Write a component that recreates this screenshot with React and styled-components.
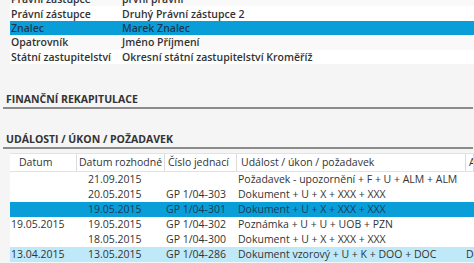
import React from 'react';
import styled, { createGlobalStyle } from 'styled-components';

const GlobalStyle = createGlobalStyle`
  html, body {
    margin: 0;
    padding: 0;
    background: #f5f5f5;
    font-family: "Open Sans", "DejaVu Sans", sans-serif;
    color: #333;
    overflow: hidden;
  }
`;

const Page = styled.div`
  width: 474px;
  height: 263px;
  overflow: hidden;
`;

const InfoTable = styled.div`
  margin-top: -8px;
  margin-left: 10px;
  display: flex;
  flex-direction: column;
`;

const InfoRow = styled.div`
  display: grid;
  grid-template-columns: 111px 1fr;
  height: 14.4px;
  align-items: center;
  font-size: 10.5px;
  font-weight: 600;
  line-height: 14px;
  background: ${(p) => (p.$selected ? '#0a9ed9' : p.$alt ? '#f9f9f9' : '#fff')};
  color: ${(p) => (p.$selected ? '#1b3a57' : '#333')};
  white-space: nowrap;

  span {
    padding-left: 1px;
  }
`;

const Section = styled.div`
  margin: ${(p) => p.$top}px 1px 0 3px;
  padding: 0 0 1px 3px;
  border-bottom: 2px solid #8c8c8c;
  font-size: 10.5px;
  font-weight: 700;
  line-height: 14px;
  color: #333;
  text-transform: uppercase;
`;

const Grid = styled.div`
  margin: 4px 0 0 10px;
  display: flex;
  flex-direction: column;
`;

const cols = '67px 88px 72px 229px 1fr';

const HeadRow = styled.div`
  display: grid;
  grid-template-columns: ${cols};
  height: 19px;
  background: #fff;
  border-top: 1px solid #e2e2e2;
  border-bottom: 1px solid #e2e2e2;
  box-sizing: border-box;
`;

const HeadCell = styled.div`
  display: flex;
  align-items: center;
  padding-left: ${(p) => p.$pad}px;
  border-right: 1px solid #dcdcdc;
  font-size: 10.5px;
  white-space: nowrap;
  overflow: hidden;
`;

const Row = styled.div`
  display: grid;
  grid-template-columns: ${cols};
  height: 15px;
  align-items: center;
  font-size: 10.5px;
  line-height: 15px;
  background: ${(p) =>
    p.$tone === 'selected' ? '#0a9ed9' : p.$tone === 'light' ? '#bfe9f8' : '#fff'};
  color: ${(p) => (p.$tone === 'selected' ? '#1b3a57' : '#333')};
`;

const Cell = styled.div`
  padding-left: ${(p) => p.$pad}px;
  white-space: nowrap;
  overflow: hidden;
`;

const info = [
  ['Právní zástupce', 'první právní', 'alt'],
  ['Právní zástupce', 'Druhý Právní zástupce 2'],
  ['Znalec', 'Marek Znalec', 'selected'],
  ['Opatrovník', 'Jméno Příjmení', 'alt'],
  ['Státní zastupitelství', 'Okresní státní zastupitelství Kroměříž'],
];

const heads = [
  ['Datum', 9],
  ['Datum rozhodné', 2],
  ['Číslo jednací', 3],
  ['Událost / úkon / požadavek', 4],
  ['A', 3],
];

const pads = [1, 11, 1, 1, 0];

const rows = [
  { cells: ['', '21.09.2015', '', 'Požadavek - upozornění + F + U + ALM + ALM', ''] },
  { cells: ['', '20.05.2015', 'GP 1/04-303', 'Dokument + U + X + XXX + XXX', ''] },
  { cells: ['', '19.05.2015', 'GP 1/04-301', 'Dokument + U + X + XXX + XXX', ''], tone: 'selected' },
  { cells: ['19.05.2015', '19.05.2015', 'GP 1/04-302', 'Poznámka + U + U + UOB + PZN', ''] },
  { cells: ['', '18.05.2015', 'GP 1/04-300', 'Dokument + U + X + XXX + XXX', ''] },
  { cells: ['13.04.2015', '13.05.2015', 'GP 1/04-286', 'Dokument vzorový + U + K + DOO + DOC', 'Dd'], tone: 'light' },
];

export default function App() {
  return (
    <Page>
      <GlobalStyle />
      <InfoTable>
        {info.map(([label, value, kind], i) => (
          <InfoRow key={i} $selected={kind === 'selected'} $alt={kind === 'alt'}>
            <span>{label}</span>
            <span>{value}</span>
          </InfoRow>
        ))}
      </InfoTable>

      <Section $top={28}>Finanční rekapitulace</Section>
      <Section $top={23}>Události / úkon / požadavek</Section>

      <Grid>
        <HeadRow>
          {heads.map(([text, pad]) => (
            <HeadCell key={text} $pad={pad}>{text}</HeadCell>
          ))}
        </HeadRow>
        {rows.map((r, i) => (
          <Row key={i} $tone={r.tone}>
            {r.cells.map((c, j) => (
              <Cell key={j} $pad={pads[j]}>{c}</Cell>
            ))}
          </Row>
        ))}
      </Grid>
    </Page>
  );
}
